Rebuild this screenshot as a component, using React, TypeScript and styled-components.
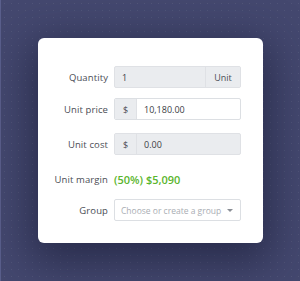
import React from "react";
import styled, { createGlobalStyle } from "styled-components";

const Global = createGlobalStyle`
  html, body { margin: 0; padding: 0; }
  body {
    width: 300px; height: 281px; overflow: hidden;
    background-color: #44486f;
    font-family: "Open Sans", "Liberation Sans", sans-serif;
  }
`;

const Page = styled.div`
  width: 300px;
  height: 281px;
  box-sizing: border-box;
  padding: 38px 37px 38px 37px;
  background-color: #44486f;
  background-image: radial-gradient(rgba(255,255,255,0.07) 0.6px, transparent 0.8px);
  background-size: 7px 7px;
  border-left: 1px solid #5a5f8c;
`;

const Card = styled.div`
  width: 225px;
  height: 205px;
  box-sizing: border-box;
  background: #fff;
  border-radius: 6px;
  padding: 28px 22px 22px 0;
  box-shadow: 0 12px 40px 8px rgba(28, 30, 58, 0.65);
  display: flex;
  flex-direction: column;
`;

const Row = styled.div<{ $mt?: number }>`
  display: grid;
  grid-template-columns: 70px 127px;
  column-gap: 6px;
  align-items: center;
  height: 22px;
  margin-top: ${(p) => p.$mt ?? 0}px;
`;

const Label = styled.div`
  text-align: right;
  font-size: 9.5px;
  color: #4a4d55;
  white-space: nowrap;
  letter-spacing: 0.1px;
`;

const Group = styled.div<{ $disabled?: boolean }>`
  display: flex;
  height: 22px;
  box-sizing: border-box;
  border: 1px solid ${(p) => (p.$disabled ? "#dfe1e5" : "#dcdfe3")};
  border-radius: 2px;
  background: ${(p) => (p.$disabled ? "#eaecef" : "#fff")};
  overflow: hidden;
`;

const Addon = styled.div<{ $w: number; $side: "left" | "right" }>`
  width: ${(p) => p.$w}px;
  flex: none;
  display: flex;
  align-items: center;
  justify-content: center;
  background: #eaecef;
  font-size: 9px;
  color: #4a4d55;
  ${(p) =>
    p.$side === "left"
      ? "border-right: 1px solid #dfe1e5;"
      : "border-left: 1px solid #dfe1e5;"}
`;

const Value = styled.div`
  flex: 1;
  display: flex;
  align-items: center;
  padding-left: 7px;
  font-size: 9px;
  color: #3a3d44;
`;

const Margin = styled.div`
  font-size: 11px;
  font-weight: 600;
  color: #5ab52d;
  white-space: nowrap;
`;

const Select = styled.div`
  display: flex;
  align-items: center;
  justify-content: space-between;
  height: 22px;
  box-sizing: border-box;
  border: 1px solid #dcdfe3;
  border-radius: 2px;
  background: #fff;
  padding: 0 7px 0 6px;
  font-size: 8.5px;
  color: #a9adb3;
  white-space: nowrap;
`;

const Caret = styled.span`
  width: 0;
  height: 0;
  border-left: 3px solid transparent;
  border-right: 3px solid transparent;
  border-top: 3px solid #8a8e95;
`;

export default function App() {
  return (
    <>
      <Global />
      <Page>
        <Card>
          <Row>
            <Label>Quantity</Label>
            <Group $disabled>
              <Value>1</Value>
              <Addon $w={34} $side="right">Unit</Addon>
            </Group>
          </Row>
          <Row $mt={10}>
            <Label>Unit price</Label>
            <Group>
              <Addon $w={21} $side="left">$</Addon>
              <Value>10,180.00</Value>
            </Group>
          </Row>
          <Row $mt={13}>
            <Label>Unit cost</Label>
            <Group $disabled>
              <Addon $w={21} $side="left">$</Addon>
              <Value>0.00</Value>
            </Group>
          </Row>
          <Row $mt={13}>
            <Label>Unit margin</Label>
            <Margin>(50%) $5,090</Margin>
          </Row>
          <Row $mt={9}>
            <Label>Group</Label>
            <Select>
              <span>Choose or create a group</span>
              <Caret />
            </Select>
          </Row>
        </Card>
      </Page>
    </>
  );
}
